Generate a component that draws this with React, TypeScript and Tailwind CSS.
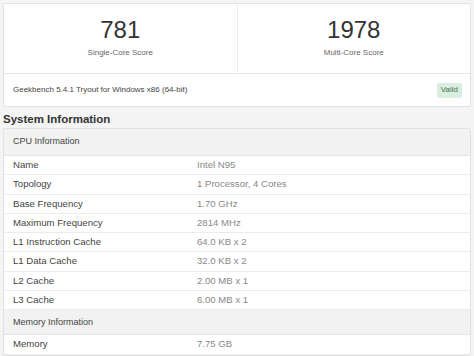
const cpuRows: [string, string][] = [
  ["Name", "Intel N95"],
  ["Topology", "1 Processor, 4 Cores"],
  ["Base Frequency", "1.70 GHz"],
  ["Maximum Frequency", "2814 MHz"],
  ["L1 Instruction Cache", "64.0 KB x 2"],
  ["L1 Data Cache", "32.0 KB x 2"],
  ["L2 Cache", "2.00 MB x 1"],
  ["L3 Cache", "6.00 MB x 1"],
];

function Score({ value, label }: { value: string; label: string }) {
  return (
    <div className="flex-1 flex flex-col items-center pt-[12px]">
      <div className="text-[24px] leading-[28px] text-[#333]">{value}</div>
      <div className="text-[8px] leading-[12px] text-[#666] mt-[3px]">{label}</div>
    </div>
  );
}

function SectionHead({ title, tall }: { title: string; tall?: boolean }) {
  return (
    <div
      className={
        tall
          ? "h-[27px] flex items-center px-[9px] bg-[#f2f2f2] border-b border-[#e4e4e4] text-[9px] text-[#444]"
          : "h-[25px] flex items-center px-[9px] bg-[#f2f2f2] border-b border-[#e4e4e4] text-[9px] text-[#444]"
      }
    >
      {title}
    </div>
  );
}

function Row({ label, value }: { label: string; value: string }) {
  return (
    <div className="h-[19.3px] flex items-center border-b border-[#ebebeb] text-[9.6px] bg-white">
      <div className="w-[193px] pl-[9px] text-[#444]">{label}</div>
      <div className="text-[#888]">{value}</div>
    </div>
  );
}

export default function App() {
  return (
    <div
      className="w-[474px] h-[356px] overflow-hidden bg-[#f4f4f4] p-[3px]"
      style={{ fontFamily: '"Liberation Sans", Arial, sans-serif' }}
    >
      <div className="bg-white border border-[#e2e2e2] rounded-[2px]">
        <div className="flex h-[70px] border-b border-[#e6e6e6]">
          <Score value="781" label="Single-Core Score" />
          <div className="w-px bg-[#ececec]" />
          <Score value="1978" label="Multi-Core Score" />
        </div>
        <div className="h-[32px] flex items-center justify-between pl-[9px] pr-[8px]">
          <span className="text-[8px] text-[#444]">Geekbench 5.4.1 Tryout for Windows x86 (64-bit)</span>
          <span className="text-[8px] text-[#4d6b55] bg-[#d8eedf] rounded-[2px] px-[4px] h-[15px] flex items-center">
            Valid
          </span>
        </div>
      </div>
      <h2 className="text-[11.5px] font-bold text-[#333] mt-[4px] leading-[16px]">System Information</h2>
      <div className="mt-[1px] border border-[#e2e2e2] rounded-[2px] overflow-hidden">
        <SectionHead title="CPU Information" tall />
        {cpuRows.map(([l, v]) => (
          <Row key={l} label={l} value={v} />
        ))}
        <SectionHead title="Memory Information" />
        <Row label="Memory" value="7.75 GB" />
      </div>
    </div>
  );
}
